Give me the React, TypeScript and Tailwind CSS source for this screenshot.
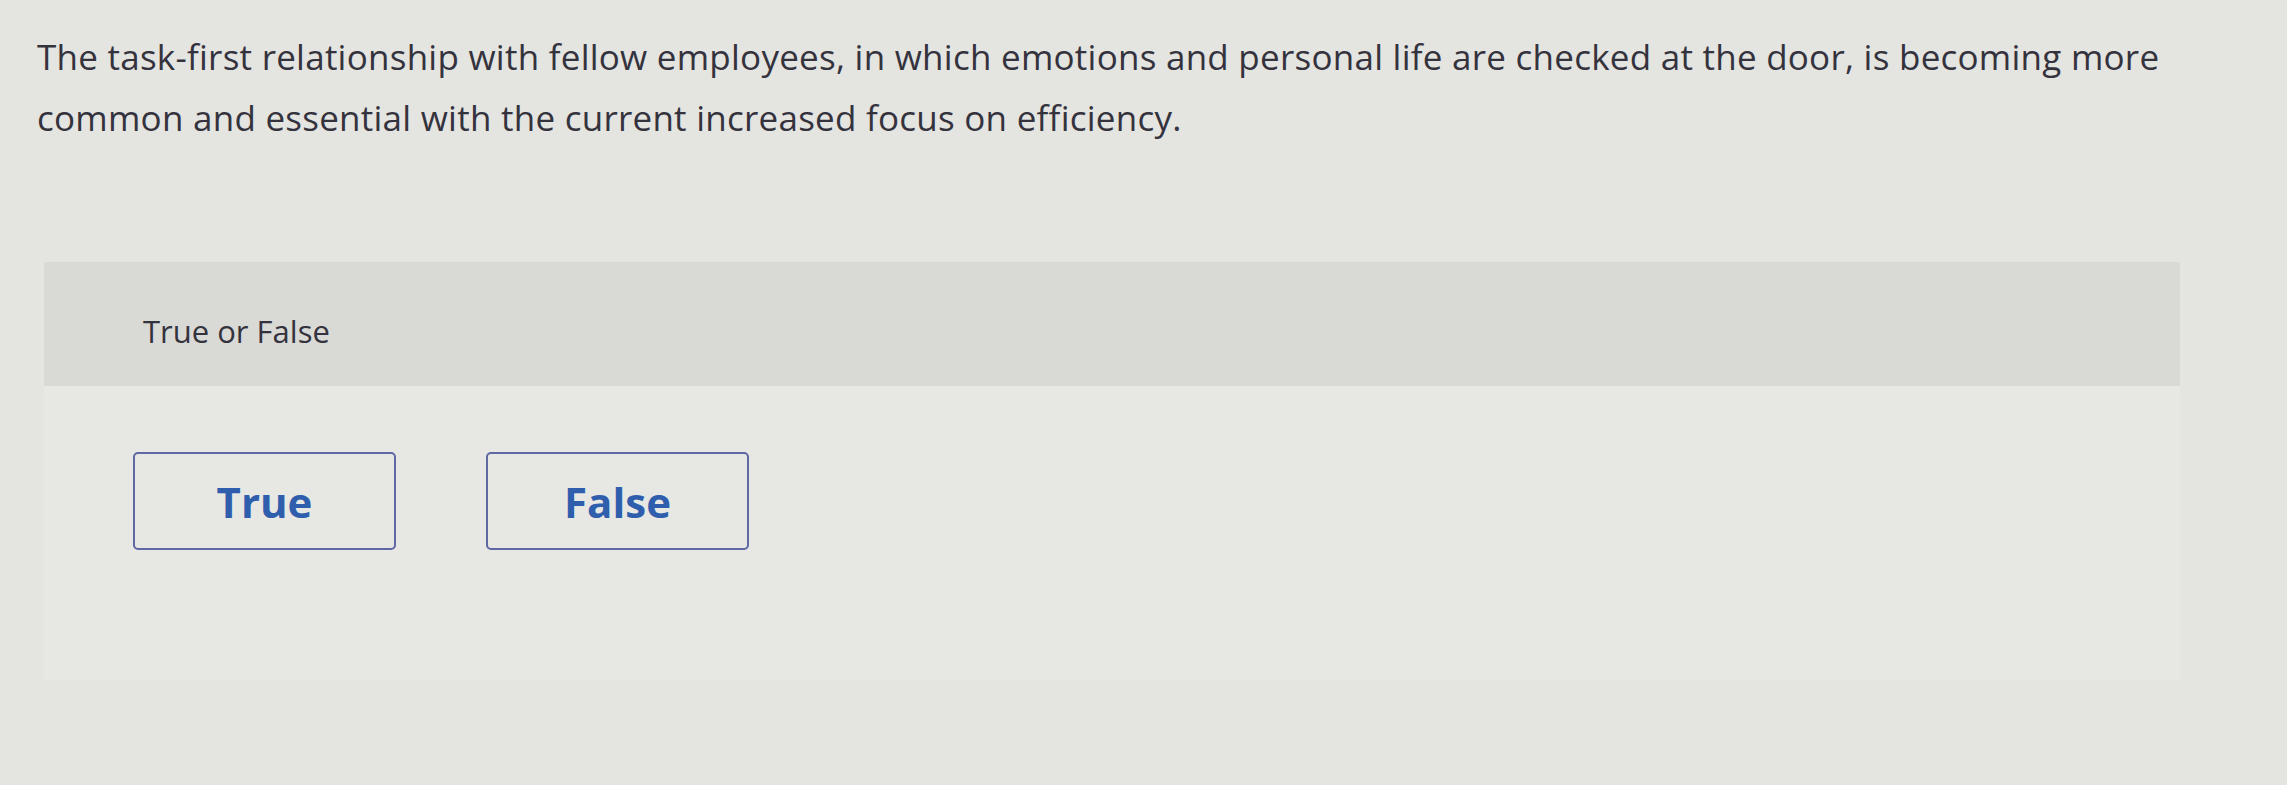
import React from "react";

function ChoiceButton({ label }: { label: string }) {
  return (
    <button
      type="button"
      className="flex h-[98px] w-[263px] items-center justify-center rounded-[5px] border-2 border-[#5f68a3] bg-transparent text-[42px] font-bold text-[#2f5ead]"
    >
      {label}
    </button>
  );
}

export default function App() {
  return (
    <div className="h-[785px] w-[2287px] overflow-hidden bg-[#e4e4e1] font-['Open_Sans',sans-serif]">
      <p className="pl-[37px] pr-[100px] pt-[26px] text-[35px] leading-[61px] tracking-[0.25px] text-[#34333d]">
        The task-first relationship with fellow employees, in which emotions and personal life are checked at the door, is becoming more common and essential with the current increased focus on efficiency.
      </p>

      <section className="ml-[44px] mt-[114px] h-[418px] w-[2136px] bg-[#e7e7e4]">
        <div className="flex h-[124px] items-center bg-[#d9d9d6] pl-[99px] pt-[14px]">
          <span className="text-[31px] text-[#34333d]">True or False</span>
        </div>
        <div className="flex gap-[90px] pl-[89px] pt-[66px]">
          <ChoiceButton label="True" />
          <ChoiceButton label="False" />
        </div>
      </section>
    </div>
  );
}
